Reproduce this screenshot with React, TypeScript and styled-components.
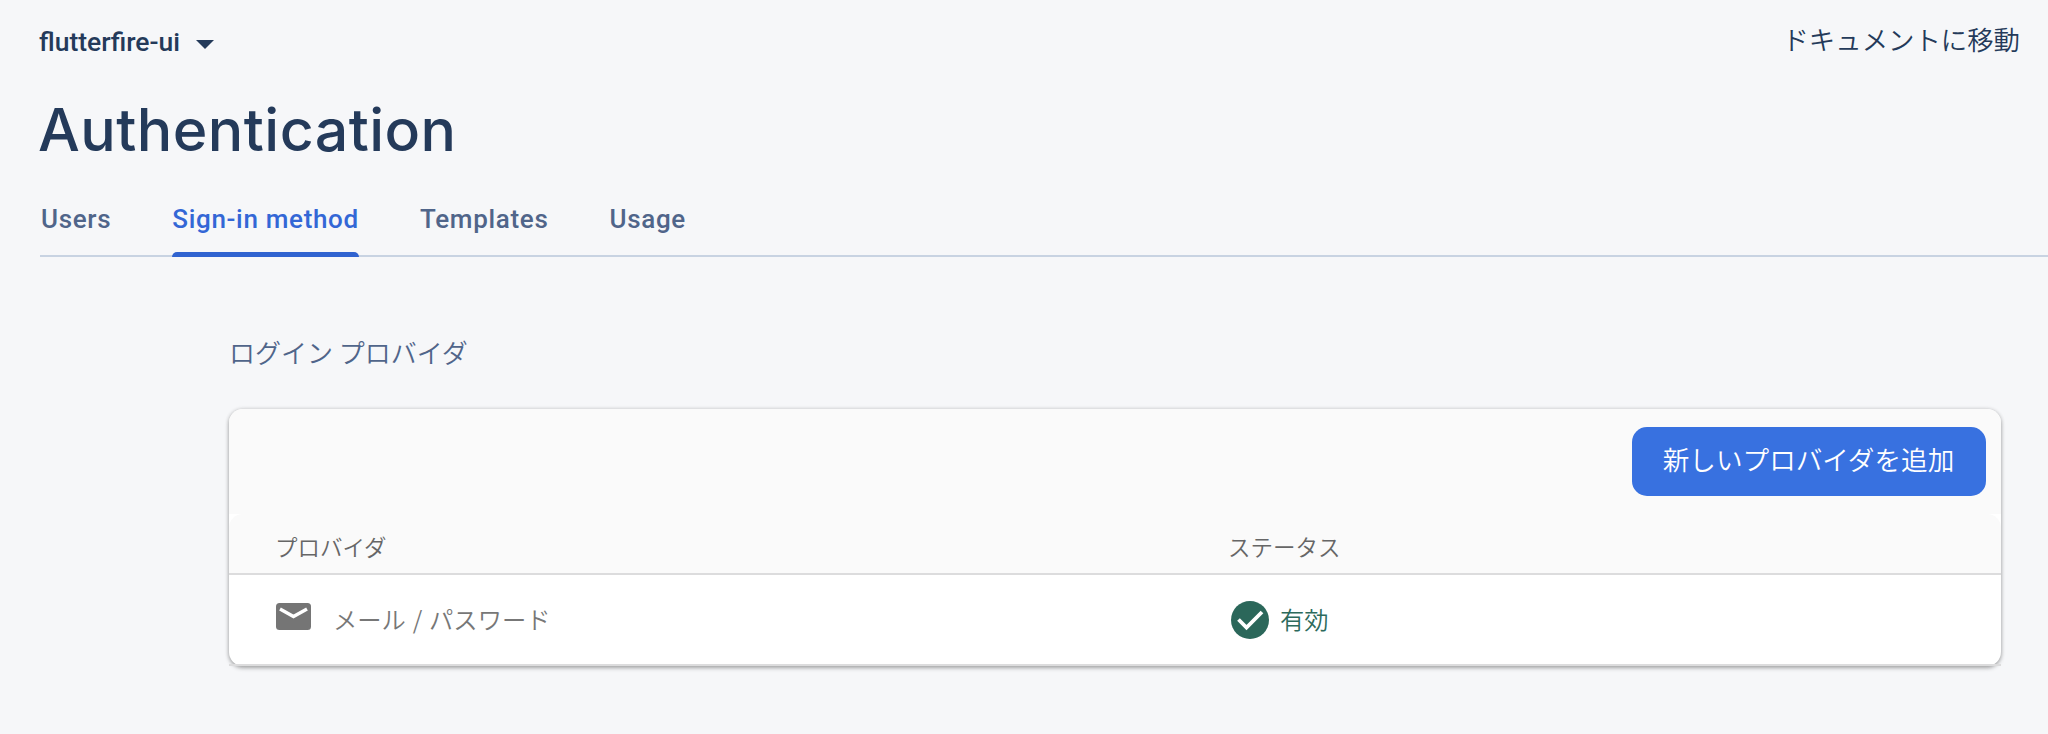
import React from "react";
import styled, { createGlobalStyle } from "styled-components";

const GlobalStyle = createGlobalStyle`
  *, *::before, *::after { box-sizing: border-box; }
  body {
    margin: 0;
    background: #f6f7f9;
    font-family: Roboto, "Noto Sans CJK JP", sans-serif;
    -webkit-font-smoothing: antialiased;
  }
`;

const Page = styled.main`
  min-height: 734px;
  overflow: hidden;
  background: #f6f7f9;
`;

const TopBar = styled.header`
  display: flex;
  justify-content: space-between;
  align-items: center;
  height: 84px;
  padding: 0 28px 0 39px;
`;

const ProjectButton = styled.button`
  display: flex;
  align-items: center;
  gap: 16px;
  padding: 0;
  border: 0;
  background: none;
  color: #243a5a;
  font: 500 26.5px/32px Roboto, sans-serif;
`;

const Caret = styled.svg`
  display: block;
  width: 18px;
  height: 9px;
  margin-top: 4px;
`;

const DocsLink = styled.a`
  color: #243a5a;
  font: 350 26.4px/36px "Noto Sans CJK JP", sans-serif;
  margin-top: -7px;
`;

const Title = styled.h1`
  margin: 12px 0 0 38px;
  color: #243a5a;
  font: 500 59px/68px Inter, sans-serif;
  letter-spacing: 0.45px;
`;

const Tabs = styled.nav`
  display: flex;
  gap: 61px;
  height: 93px;
  margin-left: 40px;
  padding-left: 1px;
  border-bottom: 2px solid #c8d3e2;
`;

const Tab = styled.a<{ $active?: boolean }>`
  display: flex;
  flex-direction: column;
  justify-content: space-between;
  height: 93px;
  padding-top: 39px;
  color: ${(p) => (p.$active ? "#3367d6" : "#50658a")};
  font: 500 26px/32px Roboto, sans-serif;
  letter-spacing: 0.68px;

  &::after {
    content: "";
    height: 5px;
    border-radius: 5px 5px 0 0;
    background: ${(p) => (p.$active ? "#3063d0" : "transparent")};
  }
`;

const Section = styled.section`
  margin: 75px 47px 0 229px;
`;

const SectionTitle = styled.h2`
  margin: 0 0 37px;
  color: #50658a;
  font: 350 26px/40px "Noto Sans CJK JP", sans-serif;
`;

const Card = styled.div`
  height: 257px;
  border-radius: 14px;
  background: #fff;
  box-shadow: 0 2px 4px rgba(0, 0, 0, 0.3), 0 0 4px rgba(0, 0, 0, 0.14);
`;

const Toolbar = styled.div`
  display: flex;
  justify-content: flex-end;
  align-items: flex-start;
  height: 105px;
  padding: 18px 15px 0 0;
  border-radius: 14px 14px 0 0;
  background: #fafafa;
`;

const AddButton = styled.button`
  width: 354px;
  height: 69px;
  padding: 0 1px 5px 0;
  border: 0;
  border-radius: 15px;
  background: #3871e0;
  color: #fff;
  font: 350 26.6px/36px "Noto Sans CJK JP", sans-serif;
`;

const columns = "953px 1fr";

const TableHead = styled.div`
  display: grid;
  grid-template-columns: ${columns};
  align-items: center;
  height: 61px;
  padding: 4px 0 0 46px;
  border-bottom: 2px solid #dcdcdd;
  border-radius: 14px 14px 0 0;
  background: #fafafa;
  color: #666;
  font: 350 22.5px/36px "Noto Sans CJK JP", sans-serif;
`;

const TableRow = styled.div`
  display: grid;
  grid-template-columns: ${columns};
  align-items: center;
  height: 91px;
  padding-left: 46px;
  border-bottom: 2px solid #dcdcdd;
`;

const Cell = styled.div<{ $color: string; $gap: number }>`
  display: flex;
  align-items: center;
  gap: ${(p) => p.$gap}px;
  color: ${(p) => p.$color};
  font: 350 24.3px/36px "Noto Sans CJK JP", sans-serif;
`;

const CellText = styled.span`
  margin-top: -2px;
  word-spacing: 1.4px;
`;

const MailIcon = styled.svg`
  display: block;
  width: 35px;
  height: 27px;
  margin: -6px 0 0 1px;
`;

const CheckIcon = styled.svg`
  display: block;
  width: 38px;
  height: 38px;
  margin-left: 3px;
`;

const tabs = ["Users", "Sign-in method", "Templates", "Usage"];

export default function App() {
  return (
    <Page>
      <GlobalStyle />
      <TopBar>
        <ProjectButton>
          flutterfire-ui
          <Caret viewBox="0 0 18 9">
            <path d="M0 0h18l-9 9z" fill="#243a5a" />
          </Caret>
        </ProjectButton>
        <DocsLink>ドキュメントに移動</DocsLink>
      </TopBar>
      <Title>Authentication</Title>
      <Tabs>
        {tabs.map((label) => (
          <Tab key={label} $active={label === "Sign-in method"}>
            {label}
          </Tab>
        ))}
      </Tabs>
      <Section>
        <SectionTitle>ログイン プロバイダ</SectionTitle>
        <Card>
          <Toolbar>
            <AddButton>新しいプロバイダを追加</AddButton>
          </Toolbar>
          <TableHead>
            <span>プロバイダ</span>
            <span>ステータス</span>
          </TableHead>
          <TableRow>
            <Cell $color="#777" $gap={22}>
              <MailIcon viewBox="0 0 35 27">
                <rect width="35" height="27" rx="3.5" fill="#757575" />
                <path d="M4 6l13.500 7.500L31 6" fill="none" stroke="#fff" strokeWidth="3.4" />
              </MailIcon>
              <CellText>メール / パスワード</CellText>
            </Cell>
            <Cell $color="#2d6a5c" $gap={11}>
              <CheckIcon viewBox="0 0 38 38">
                <circle cx="19" cy="19" r="19" fill="#2b675a" />
                <path d="M7.500 18.500l8 8L31 11" fill="none" stroke="#fff" strokeWidth="3.800" />
              </CheckIcon>
              <CellText>有効</CellText>
            </Cell>
          </TableRow>
        </Card>
      </Section>
    </Page>
  );
}
